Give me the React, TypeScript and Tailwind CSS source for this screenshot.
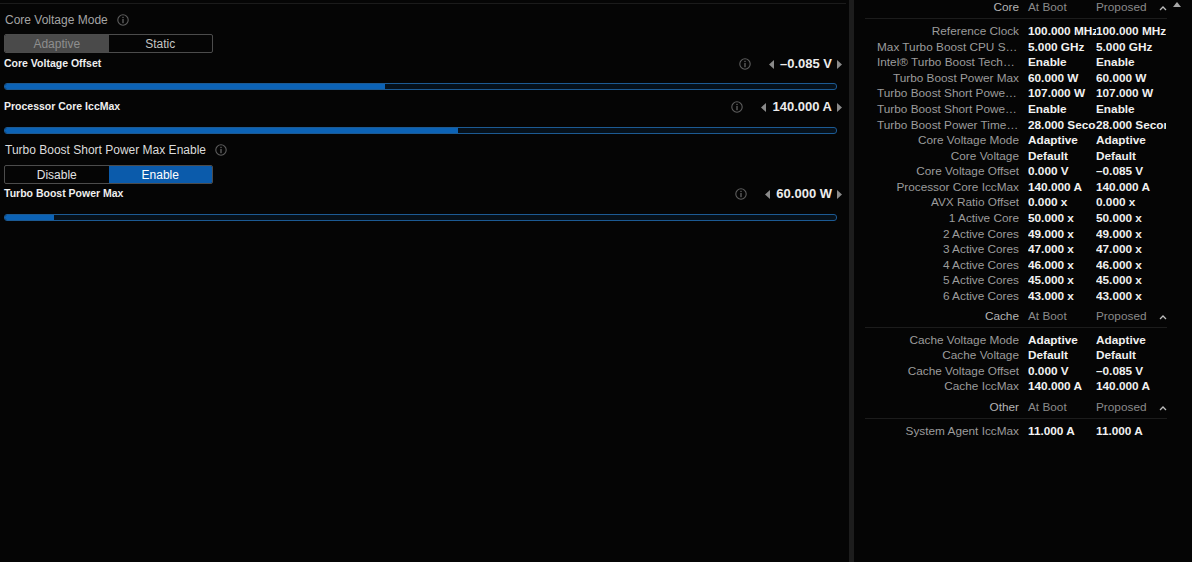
import React from 'react'

// small circled "i" used next to settings
function InfoIcon() {
  return (
    <svg width="12" height="12" viewBox="0 0 12 12" className="shrink-0">
      <circle cx="6" cy="6" r="5.2" fill="none" stroke="#5e5e5e" strokeWidth="1.1" />
      <rect x="5.4" y="2.8" width="1.2" height="1.2" fill="#6a6a6a" />
      <rect x="5.4" y="4.9" width="1.2" height="4.3" fill="#6a6a6a" />
    </svg>
  )
}

function Arrow({ dir }: { dir: 'left' | 'right' }) {
  return (
    <svg width="5" height="9" viewBox="0 0 5 9" className="shrink-0">
      {dir === 'left' ? (
        <polygon points="5,0 0,4.5 5,9" fill="#8a8a8a" />
      ) : (
        <polygon points="0,0 5,4.5 0,9" fill="#8a8a8a" />
      )}
    </svg>
  )
}

function Segmented({ options, selected, blue }: { options: string[]; selected: number; blue?: boolean }) {
  return (
    <div className="flex w-[209px] h-[19px] border border-[#4c4c4c] rounded-[2px] overflow-hidden text-[12px] leading-[19px]">
      {options.map((o, i) => {
        const on = i === selected
        let cls = 'flex-1 text-center '
        if (on && blue) cls += 'bg-[#0b5bab] text-white'
        else if (on) cls += 'bg-[#4a4a4a] text-[#8e8e8e]'
        else if (blue) cls += 'text-[#e2e2e2]'
        else cls += 'text-[#c4c4c4]'
        return (
          <div key={o} className={cls}>
            {o}
          </div>
        )
      })}
    </div>
  )
}

function ValueRow({ label, value, mt }: { label: string; value: string; mt: string }) {
  return (
    <div className={`flex items-center h-[16px] ${mt}`}>
      <span className="text-[10.5px] font-bold text-[#efefef]">{label}</span>
      <div className="ml-auto flex items-center">
        <InfoIcon />
        <div className="ml-[18px]">
          <Arrow dir="left" />
        </div>
        <span className="ml-[6px] text-[13px] font-bold text-[#ececec]">{value}</span>
        <div className="ml-[5px]">
          <Arrow dir="right" />
        </div>
      </div>
    </div>
  )
}

function Slider({ fill, mt }: { fill: string; mt: string }) {
  return (
    <div className={`${mt} mr-[5px] h-[7px] rounded-[3px] border border-[#1c5a93] bg-[#06111b] overflow-hidden`}>
      <div className={`h-full bg-[#0c63b6] ${fill}`} />
    </div>
  )
}

type Row = [string, string, string]

const coreRows: Row[] = [
  ['Reference Clock', '100.000 MHz', '100.000 MHz'],
  ['Max Turbo Boost CPU Speed', '5.000 GHz', '5.000 GHz'],
  ['Intel® Turbo Boost Technology', 'Enable', 'Enable'],
  ['Turbo Boost Power Max', '60.000 W', '60.000 W'],
  ['Turbo Boost Short Power Max', '107.000 W', '107.000 W'],
  ['Turbo Boost Short Power Max Enable', 'Enable', 'Enable'],
  ['Turbo Boost Power Time Window', '28.000 Seconds', '28.000 Seconds'],
  ['Core Voltage Mode', 'Adaptive', 'Adaptive'],
  ['Core Voltage', 'Default', 'Default'],
  ['Core Voltage Offset', '0.000 V', '–0.085 V'],
  ['Processor Core IccMax', '140.000 A', '140.000 A'],
  ['AVX Ratio Offset', '0.000 x', '0.000 x'],
  ['1 Active Core', '50.000 x', '50.000 x'],
  ['2 Active Cores', '49.000 x', '49.000 x'],
  ['3 Active Cores', '47.000 x', '47.000 x'],
  ['4 Active Cores', '46.000 x', '46.000 x'],
  ['5 Active Cores', '45.000 x', '45.000 x'],
  ['6 Active Cores', '43.000 x', '43.000 x'],
]

const cacheRows: Row[] = [
  ['Cache Voltage Mode', 'Adaptive', 'Adaptive'],
  ['Cache Voltage', 'Default', 'Default'],
  ['Cache Voltage Offset', '0.000 V', '–0.085 V'],
  ['Cache IccMax', '140.000 A', '140.000 A'],
]

const otherRows: Row[] = [['System Agent IccMax', '11.000 A', '11.000 A']]

function Section({ title, rows, mt }: { title: string; rows: Row[]; mt: string }) {
  return (
    <div className={mt}>
      <div className="flex items-center h-[14px] text-[11.8px]">
        <div className="w-[154px] text-right text-[#b4b4b4]">{title}</div>
        <div className="w-[77px] pl-[9px] text-[#8a8a8a]">At Boot</div>
        <div className="w-[63px] text-[#8a8a8a]">Proposed</div>
        <svg width="8" height="6" viewBox="0 0 8 6">
          <polyline points="1,5 4,2 7,5" fill="none" stroke="#bdbdbd" strokeWidth="1.3" />
        </svg>
      </div>
      <div className="mt-[3px] border-b border-[#1c1c1c] w-[302px]" />
      <div className="pt-[5px]">
        {rows.map(([l, a, p]) => (
          <div key={l} className="flex items-center h-[15.6px] text-[11.8px] whitespace-nowrap">
            <div className="w-[154px] pl-[12px] text-right text-[#9c9c9c] overflow-hidden text-ellipsis">{l}</div>
            <div className="w-[68px] ml-[9px] font-bold text-[#f2f2f2] overflow-hidden">{a}</div>
            <div className="w-[70px] font-bold text-[#f0f0f0] overflow-hidden">{p}</div>
          </div>
        ))}
      </div>
    </div>
  )
}

export default function App() {
  return (
    <div className="w-[1192px] h-[562px] flex bg-[#050505] overflow-hidden font-['Liberation_Sans',Arial,sans-serif]">
      {/* settings editor */}
      <div className="w-[849px] shrink-0">
        <div className="h-[3px]" />
        <div className="border-t border-[#1b1b1b] w-[846px]" />
        <div className="pl-[4px] pr-[7px]">
          <div className="mt-[8px] flex items-center h-[16px] pl-[1px]">
            <span className="text-[12px] text-[#a4a4a4]">Core Voltage Mode</span>
            <div className="ml-[9px]">
              <InfoIcon />
            </div>
          </div>
          <div className="mt-[6px]">
            <Segmented options={['Adaptive', 'Static']} selected={0} />
          </div>
          <ValueRow label="Core Voltage Offset" value="–0.085 V" mt="mt-[3px]" />
          <Slider fill="w-[45.7%]" mt="mt-[11px]" />
          <ValueRow label="Processor Core IccMax" value="140.000 A" mt="mt-[9px]" />
          <Slider fill="w-[54.5%]" mt="mt-[12px]" />
          <div className="mt-[8px] flex items-center h-[16px] pl-[1px]">
            <span className="text-[12px] text-[#dcdcdc]">Turbo Boost Short Power Max Enable</span>
            <div className="ml-[9px]">
              <InfoIcon />
            </div>
          </div>
          <div className="mt-[7px]">
            <Segmented options={['Disable', 'Enable']} selected={1} blue />
          </div>
          <ValueRow label="Turbo Boost Power Max" value="60.000 W" mt="mt-[2px]" />
          <Slider fill="w-[5.9%]" mt="mt-[12px]" />
        </div>
      </div>

      {/* splitter */}
      <div className="w-[5px] shrink-0 bg-[#1d1d1d]" />

      {/* summary */}
      <div className="relative flex-1 pl-[11px] pt-[1px]">
        <div className="absolute right-[11px] top-[2px]">
          <svg width="8" height="5" viewBox="0 0 8 5">
            <polygon points="0,5 4,0 8,5" fill="#a8a8a8" />
          </svg>
        </div>
        <Section title="Core" rows={coreRows} mt="" />
        <Section title="Cache" rows={cacheRows} mt="mt-[5px]" />
        <Section title="Other" rows={otherRows} mt="mt-[6px]" />
      </div>
    </div>
  )
}
